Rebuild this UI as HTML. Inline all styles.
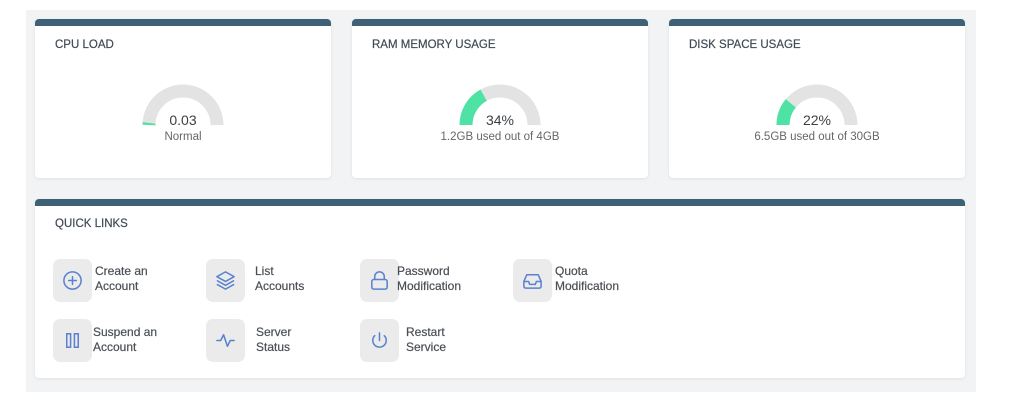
<!DOCTYPE html>
<html><head><meta charset="utf-8"><style>
*{margin:0;padding:0;box-sizing:border-box}
body{width:1024px;height:402px;background:#fff;font-family:"Liberation Sans",sans-serif;position:relative;overflow:hidden}
.bg{position:absolute;left:26px;top:10px;width:950px;height:382px;background:#f1f3f4}
.card{position:absolute;background:#fff;border-radius:4px;box-shadow:0 1px 3px rgba(0,0,0,.08);overflow:hidden}
.card:before{content:"";position:absolute;left:0;top:0;right:0;height:7px;background:#3f6177}
.title{position:absolute;left:20px;top:20px;font-size:11.5px;color:#3f4a56;-webkit-text-stroke:.2px #3f4a56}
.g{position:absolute;top:0;left:0}
.val{position:absolute;width:100%;text-align:center;top:93px;font-size:14px;color:#3c4044}
.sub{position:absolute;width:100%;text-align:center;top:112px;font-size:11.5px;color:#666}
.ib{position:absolute;width:39px;height:43px;background:#ebebeb;border-radius:7px}
.ib svg{position:absolute;left:8px;top:10px}
.lb{position:absolute;font-size:12px;color:#4a4f55;line-height:15px;-webkit-text-stroke:.2px #4a4f55}
</style></head><body>
<div class="bg"></div>

<div class="card" style="left:35px;top:19px;width:296px;height:159px">
<div class="title">CPU LOAD</div>
<svg class="g" width="296" height="159"><path d="M114 106 A34 34 0 0 1 182 106" fill="none" stroke="#e3e3e3" stroke-width="13"/><path d="M114 106 A34 34 0 0 1 114.2 103.9" fill="none" stroke="#4ee3a4" stroke-width="13"/></svg>
<div class="val">0.03</div><div class="sub">Normal</div>
</div>

<div class="card" style="left:352px;top:19px;width:296px;height:159px">
<div class="title">RAM MEMORY USAGE</div>
<svg class="g" width="296" height="159"><path d="M114 106 A34 34 0 0 1 182 106" fill="none" stroke="#e3e3e3" stroke-width="13"/><path d="M114 106 A34 34 0 0 1 131.6 76.2" fill="none" stroke="#4ee3a4" stroke-width="13"/></svg>
<div class="val">34%</div><div class="sub">1.2GB used out of 4GB</div>
</div>

<div class="card" style="left:669px;top:19px;width:296px;height:159px">
<div class="title">DISK SPACE USAGE</div>
<svg class="g" width="296" height="159"><path d="M114 106 A34 34 0 0 1 182 106" fill="none" stroke="#e3e3e3" stroke-width="13"/><path d="M114 106 A34 34 0 0 1 121.8 84.3" fill="none" stroke="#4ee3a4" stroke-width="13"/></svg>
<div class="val">22%</div><div class="sub">6.5GB used out of 30GB</div>
</div>

<div class="card" style="left:35px;top:199px;width:930px;height:179px">
<div class="title" style="top:19px">QUICK LINKS</div>
</div>

<div class="ib" style="left:53px;top:259px"><svg width="23" height="23" viewBox="0 0 24 24" fill="none" stroke="#5b82d0" stroke-width="1.6" stroke-linecap="round"><circle cx="12" cy="12" r="9"/><path d="M12 8v8M8 12h8"/></svg></div>
<div class="lb" style="left:95px;top:264px">Create an<br>Account</div>

<div class="ib" style="left:206px;top:259px"><svg width="23" height="23" viewBox="0 0 24 24" fill="none" stroke="#5b82d0" stroke-width="1.6" stroke-linejoin="round"><path d="M12 3l9 5-9 5-9-5z"/><path d="M3 12l9 5 9-5"/><path d="M3 16l9 5 9-5"/></svg></div>
<div class="lb" style="left:255px;top:264px">List<br>Accounts</div>

<div class="ib" style="left:360px;top:259px"><svg width="23" height="23" viewBox="0 0 24 24" fill="none" stroke="#5b82d0" stroke-width="1.6"><rect x="4" y="11" width="16" height="10" rx="2"/><path d="M7 11V8a5 5 0 0 1 10 0v3"/></svg></div>
<div class="lb" style="left:397px;top:264px">Password<br>Modification</div>

<div class="ib" style="left:513px;top:259px"><svg width="23" height="23" viewBox="0 0 24 24" fill="none" stroke="#5b82d0" stroke-width="1.6" stroke-linejoin="round"><path d="M3 13l3-7h12l3 7v5a2 2 0 0 1-2 2H5a2 2 0 0 1-2-2z"/><path d="M3 13h5l1 3h6l1-3h5"/></svg></div>
<div class="lb" style="left:555px;top:264px">Quota<br>Modification</div>

<div class="ib" style="left:53px;top:319px"><svg width="23" height="23" viewBox="0 0 24 24" fill="none" stroke="#5b82d0" stroke-width="1.6"><rect x="6" y="5" width="4" height="14"/><rect x="14" y="5" width="4" height="14"/></svg></div>
<div class="lb" style="left:93px;top:325px">Suspend an<br>Account</div>

<div class="ib" style="left:206px;top:319px"><svg width="23" height="23" viewBox="0 0 24 24" fill="none" stroke="#5b82d0" stroke-width="1.6" stroke-linejoin="round" stroke-linecap="round"><path d="M3 12h4l3-6 4 12 3-6h4"/></svg></div>
<div class="lb" style="left:256px;top:325px">Server<br>Status</div>

<div class="ib" style="left:360px;top:319px"><svg width="23" height="23" viewBox="0 0 24 24" fill="none" stroke="#5b82d0" stroke-width="1.6" stroke-linecap="round"><path d="M12 4v8"/><path d="M7 7a7 7 0 1 0 10 0"/></svg></div>
<div class="lb" style="left:406px;top:325px">Restart<br>Service</div>
</body></html>
